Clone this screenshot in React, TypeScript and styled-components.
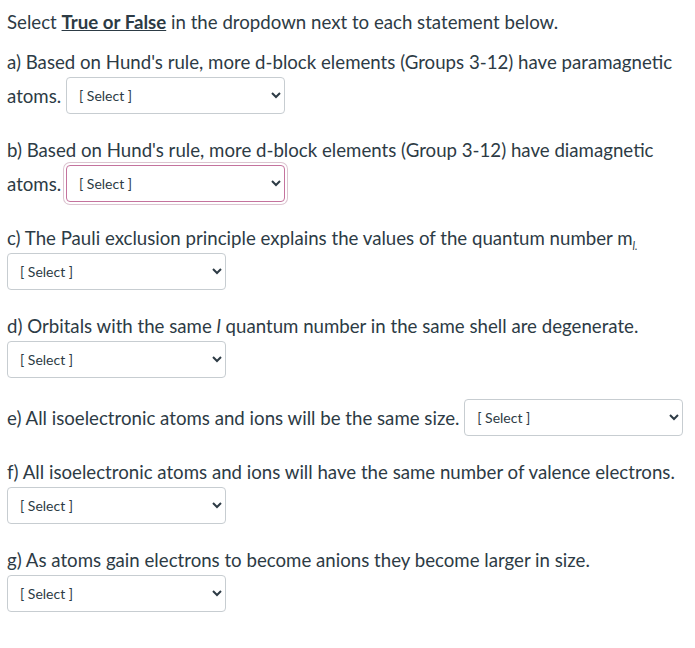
import React from 'react'
import styled, { createGlobalStyle } from 'styled-components'

const GlobalStyle = createGlobalStyle`
  html, body {
    margin: 0;
    padding: 0;
    background: #ffffff;
  }
  body {
    font-family: Lato, "Open Sans", "Liberation Sans", sans-serif;
    color: #2d3b45;
  }
`

const Page = styled.div`
  padding: 7px 7px;
  font-size: 18.67px;
  line-height: 30px;
`

const Intro = styled.p`
  margin: 0 0 10px;
`

const Strong = styled.strong`
  font-weight: 700;
  text-decoration: underline;
`

const Question = styled.p`
  display: flow-root;
  margin: 0 0 15px;
`

const Dropdown = styled.select<{ focused?: boolean }>`
  font-family: Lato, "Open Sans", "Liberation Sans", sans-serif;
  font-size: 14px;
  color: #2d3b45;
  background: #ffffff;
  box-sizing: border-box;
  height: 37px;
  width: 219px;
  padding: 0 8px;
  margin: 0 0 6px 0;
  vertical-align: middle;
  border-radius: 4px;
  border: 1px solid ${({ focused }) => (focused ? '#c5739e' : '#c7cdd1')};
  box-shadow: ${({ focused }) => (focused ? '0 0 0 2px #fff, 0 0 0 3px #dcc4d0' : 'none')};
  outline: none;
`

const BlockDropdown = styled(Dropdown)`
  display: block;
`

const Sub = styled.sub`
  font-size: 11px;
  font-style: italic;
  line-height: 0;
`

const Options = () => (
  <>
    <option>[ Select ]</option>
    <option>True</option>
    <option>False</option>
  </>
)

export default function App() {
  return (
    <>
      <GlobalStyle />
      <Page>
        <Intro>
          Select <Strong>True or False</Strong> in the dropdown next to each statement below.
        </Intro>
        <Question>
          a) Based on Hund's rule, more d-block elements (Groups 3-12) have paramagnetic atoms.{' '}
          <Dropdown>
            <Options />
          </Dropdown>
        </Question>
        <Question>
          b) Based on Hund's rule, more d-block elements (Group 3-12) have diamagnetic atoms.{' '}
          <Dropdown focused>
            <Options />
          </Dropdown>
        </Question>
        <Question>
          c) The Pauli exclusion principle explains the values of the quantum number m
          <Sub>l.</Sub>
          <BlockDropdown>
            <Options />
          </BlockDropdown>
        </Question>
        <Question>
          d) Orbitals with the same <i>l</i> quantum number in the same shell are degenerate.
          <BlockDropdown>
            <Options />
          </BlockDropdown>
        </Question>
        <Question>
          e) All isoelectronic atoms and ions will be the same size.{' '}
          <Dropdown>
            <Options />
          </Dropdown>
        </Question>
        <Question>
          f) All isoelectronic atoms and ions will have the same number of valence electrons.
          <BlockDropdown>
            <Options />
          </BlockDropdown>
        </Question>
        <Question>
          g) As atoms gain electrons to become anions they become larger in size.
          <BlockDropdown>
            <Options />
          </BlockDropdown>
        </Question>
      </Page>
    </>
  )
}
